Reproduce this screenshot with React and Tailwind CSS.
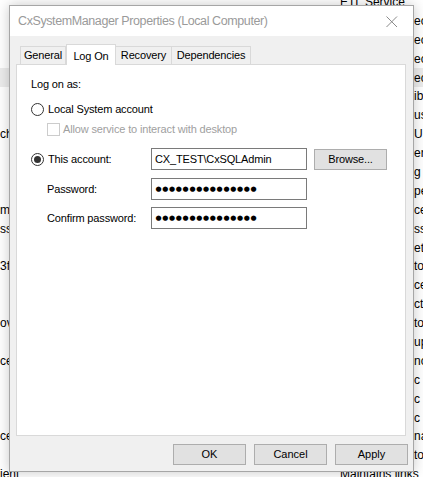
import React from "react";

const rows = [
  ["", "ETL Service", true],
  ["", "ecl"],
  ["", "ecl"],
  ["", "ecl"],
  ["", "ecl"],
  ["", "ibr"],
  ["", "us"],
  ["ch", "UN"],
  ["", "er"],
  ["", "g"],
  ["", "pe"],
  ["m", "ce"],
  ["ss", "ss"],
  ["", "ete"],
  ["3f5", "to"],
  ["", "ce"],
  ["", "ct"],
  ["ov", "to"],
  ["", "up"],
  ["ce", "nc"],
  ["", "c I"],
  ["", "c S"],
  ["", "c S"],
  ["ce", "na"],
  ["", "to"],
  ["ient", "Maintains links", true],
];

function Dots() {
  return (
    <div className="flex items-center pl-[3px] text-[7px] leading-none text-black" style={{ fontFamily: '"DejaVu Sans", sans-serif' }}>
      {Array.from({ length: 15 }).map((_, i) => (
        <span key={i} className="inline-block w-[6.8px] text-center">●</span>
      ))}
    </div>
  );
}

function Radio({ checked }) {
  return (
    <div className="w-[13px] h-[13px] rounded-full border border-[#333] bg-white flex items-center justify-center shrink-0">
      {checked && <div className="w-[7px] h-[7px] rounded-full bg-[#333]" />}
    </div>
  );
}

function Button({ children }) {
  return (
    <div className="w-[73px] h-[21px] bg-[#e1e1e1] border border-[#adadad] flex items-center justify-center text-[11px] text-black">
      {children}
    </div>
  );
}

export default function App() {
  return (
    <div
      className="relative w-[423px] h-[477px] overflow-hidden bg-white text-black"
      style={{ fontFamily: '"Liberation Sans", Arial, sans-serif' }}
    >
      {/* background services list */}
      <div className="flex flex-col mt-[-7.5px] text-[12px]">
        {rows.map(([l, r, full], i) => (
          <div key={i} className={`h-[18.9px] flex items-center whitespace-nowrap ${i === 4 ? "bg-[#ececec]" : ""}`}>
            <div className="w-[340px] shrink-0 overflow-hidden">{l}</div>
            {full ? <div>{r}</div> : <div className="ml-[74px]">{r}</div>}
          </div>
        ))}
      </div>

      {/* dialog */}
      <div className="absolute left-[9px] top-[5px] w-[405px] h-[467px] border border-[#a6a6a6] bg-[#f0f0f0] flex flex-col shadow-[0_0_12px_rgba(0,0,0,0.22)]">
        <div className="h-[30px] bg-white flex items-center justify-between pl-[8px] shrink-0">
          <span className="text-[12.5px] tracking-[-0.4px] text-[#9a9a9a]">CxSystemManager Properties (Local Computer)</span>
          <svg width="46" height="30" viewBox="0 0 46 30" className="shrink-0">
            <path d="M19.5 10.5 L30 21 M30 10.5 L19.5 21" stroke="#8a8a8a" strokeWidth="1" fill="none" />
          </svg>
        </div>

        {/* tabs */}
        <div className="flex items-end pl-[10px] mt-[7px] h-[21px] text-[11px] tracking-[-0.15px] relative z-10">
          <div className="w-[46px] h-[18px] border border-b-0 border-[#d9d9d9] bg-[#f0f0f0] flex items-center justify-center">General</div>
          <div className="w-[50px] h-[21px] -mb-px border border-b-0 border-[#d9d9d9] bg-white flex items-start pt-[3px] justify-center">Log On</div>
          <div className="w-[57px] h-[18px] -ml-px border border-b-0 border-[#d9d9d9] bg-[#f0f0f0] flex items-center justify-center">Recovery</div>
          <div className="w-[80px] h-[18px] -ml-px border border-b-0 border-[#d9d9d9] bg-[#f0f0f0] flex items-center justify-center">Dependencies</div>
        </div>

        {/* panel */}
        <div className="ml-[6px] mr-[7px] h-[372px] border border-[#d9d9d9] bg-white flex flex-col pl-[14px] pt-[12px] text-[11px] tracking-[-0.15px]">
          <div className="h-[14px] flex items-center">Log on as:</div>
          <div className="h-[14px] mt-[11px] flex items-center gap-[4px]">
            <Radio />
            <span>Local System account</span>
          </div>
          <div className="h-[13px] mt-[7px] ml-[16px] flex items-center gap-[3px]">
            <div className="w-[13px] h-[13px] border border-[#cccccc] bg-white" />
            <span className="text-[#a0a0a0]">Allow service to interact with desktop</span>
          </div>
          <div className="h-[22px] mt-[12px] flex items-center">
            <div className="w-[120px] flex items-center gap-[4px]">
              <Radio checked />
              <span>This account:</span>
            </div>
            <div className="w-[156px] h-[22px] border border-[#7a7a7a] bg-white flex items-center pl-[3px]">CX_TEST\CxSQLAdmin</div>
            <div className="ml-[7px]">
              <Button>Browse...</Button>
            </div>
          </div>
          <div className="h-[22px] mt-[8px] flex items-center">
            <div className="w-[104px] ml-[16px]">Password:</div>
            <div className="w-[156px] h-[22px] border border-[#7a7a7a] bg-white flex items-center">
              <Dots />
            </div>
          </div>
          <div className="h-[22px] mt-[7px] flex items-center">
            <div className="w-[104px] ml-[16px]">Confirm password:</div>
            <div className="w-[156px] h-[22px] border border-[#7a7a7a] bg-white flex items-center">
              <Dots />
            </div>
          </div>
        </div>

        {/* buttons */}
        <div className="flex justify-end gap-[8px] mt-[8px] pr-[5px]">
          <Button>OK</Button>
          <Button>Cancel</Button>
          <Button>Apply</Button>
        </div>
      </div>
    </div>
  );
}
